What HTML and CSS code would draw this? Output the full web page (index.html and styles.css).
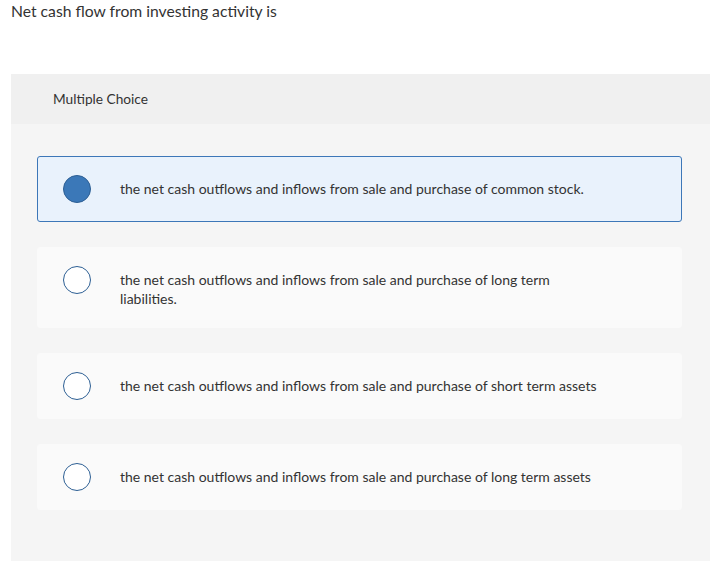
FILE: index.html
```html
<!DOCTYPE html>
<html>
<head>
<meta charset="utf-8">
<link rel="stylesheet" href="styles.css">
</head>
<body>
<div class="question">Net cash flow from investing activity is</div>
<div class="panel">
  <div class="panel-header">Multiple Choice</div>
  <div class="options">
    <div class="option selected">
      <span class="radio"></span>
      <span class="label">the net cash outflows and inflows from sale and purchase of common stock.</span>
    </div>
    <div class="option">
      <span class="radio"></span>
      <span class="label">the net cash outflows and inflows from sale and purchase of long term liabilities.</span>
    </div>
    <div class="option">
      <span class="radio"></span>
      <span class="label">the net cash outflows and inflows from sale and purchase of short term assets</span>
    </div>
    <div class="option">
      <span class="radio"></span>
      <span class="label">the net cash outflows and inflows from sale and purchase of long term assets</span>
    </div>
  </div>
</div>
</body>
</html>
```
FILE: styles.css
```css
html, body {
  margin: 0;
  padding: 0;
  background: #ffffff;
}
body {
  font-family: "Lato", "Liberation Sans", sans-serif;
  color: #333333;
  width: 710px;
  height: 561px;
  overflow: hidden;
}
.question {
  font-size: 15.7px;
  line-height: 20px;
  padding: 1px 0 0 11px;
  height: 74px;
  box-sizing: border-box;
}
.panel {
  margin-left: 11px;
  background: #f5f5f5;
  height: 487px;
}
.panel-header {
  background: #f0f0f0;
  height: 50px;
  box-sizing: border-box;
  padding-left: 42px;
  padding-bottom: 1px;
  display: flex;
  align-items: center;
  font-size: 13.7px;
}
.options {
  display: flex;
  flex-direction: column;
  gap: 25px;
  padding: 32px 28px 0 26px;
}
.option {
  display: flex;
  align-items: flex-start;
  background: #fafafa;
  border: 1px solid #fafafa;
  border-radius: 3px;
  box-sizing: border-box;
  padding: 18px 80px 18px 25px;
  font-size: 14px;
  line-height: 19px;
}
.option.selected {
  background: #e9f2fc;
  border-color: #3d77b8;
}
.radio {
  flex: none;
  width: 28px;
  height: 28px;
  box-sizing: border-box;
  border: 1.5px solid #2d5f94;
  border-radius: 50%;
  background: #ffffff;
  margin-right: 29px;
}
.selected .radio {
  background: #3b78b8;
  border-color: #2d5f94;
}
.label {
  color: #333333;
  padding-top: 3.5px;
  padding-bottom: 1.5px;
}
```
